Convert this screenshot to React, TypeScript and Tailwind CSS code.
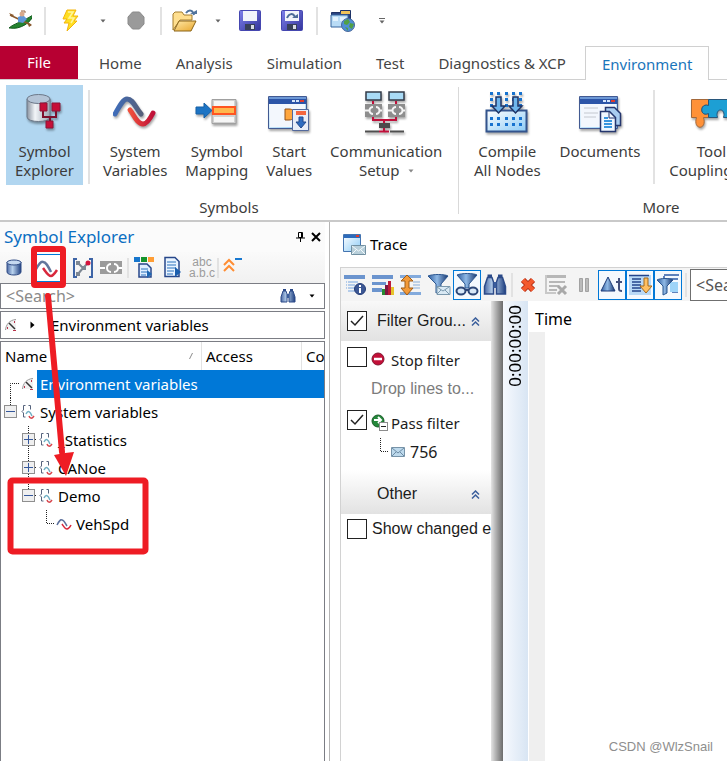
import React, { useState } from "react";

type Box = { children: React.ReactNode; w: number; h: number; className?: string };

const Glyph = ({ children, w, h, className = "" }: Box) => (
  <svg width={w} height={h} viewBox={`0 0 ${w} ${h}`} className={`shrink-0 ${className}`} fill="none" aria-hidden="true">
    {children}
  </svg>
);

const Caret = ({ className = "" }: { className?: string }) => (
  <Glyph w={6} h={4} className={className}>
    <path d="M0.500 0.500h5L3 3.500z" fill="currentColor" />
  </Glyph>
);

const Gradients = () => (
  <svg width="0" height="0" className="absolute" aria-hidden="true">
    <defs>
      <linearGradient id="blueSteel" x1="0" y1="0" x2="1" y2="0">
        <stop offset="0" stopColor="#4d6aa5" />
        <stop offset="0.400" stopColor="#b9d3ee" />
        <stop offset="1" stopColor="#1f3f80" />
      </linearGradient>
      <linearGradient id="folder" x1="0" y1="0" x2="1" y2="1">
        <stop offset="0" stopColor="#ffe9a8" />
        <stop offset="1" stopColor="#e8a62c" />
      </linearGradient>
      <linearGradient id="paper" x1="0" y1="0" x2="1" y2="1">
        <stop offset="0" stopColor="#ffffff" />
        <stop offset="1" stopColor="#8ccbf6" />
      </linearGradient>
      <linearGradient id="metal" x1="0" y1="0" x2="1" y2="0">
        <stop offset="0" stopColor="#8a93a0" />
        <stop offset="0.350" stopColor="#f2f5f8" />
        <stop offset="1" stopColor="#9ba5b2" />
      </linearGradient>
      <linearGradient id="floppy" x1="0" y1="0" x2="1" y2="1">
        <stop offset="0" stopColor="#7d80ea" />
        <stop offset="1" stopColor="#33349c" />
      </linearGradient>
      <linearGradient id="funnel" x1="0" y1="0" x2="1" y2="0">
        <stop offset="0" stopColor="#2d5a9c" />
        <stop offset="0.450" stopColor="#8fb9e6" />
        <stop offset="1" stopColor="#17366f" />
      </linearGradient>
      <linearGradient id="waveBlue" x1="0" y1="0" x2="1" y2="0">
        <stop offset="0" stopColor="#3f6cb8" />
        <stop offset="1" stopColor="#56607c" />
      </linearGradient>
      <linearGradient id="waveRed" x1="0" y1="0" x2="1" y2="0">
        <stop offset="0" stopColor="#f0503c" />
        <stop offset="1" stopColor="#bf1038" />
      </linearGradient>
    </defs>
  </svg>
);

/* ---------- quick access icons ---------- */
const Kayak = () => (
  <Glyph w={24} h={24}>
    <path d="M1 19C5 15 14 13 25 6C24 13 12 21 2 19z" fill="#23832f" stroke="#145a20" />
    <path d="M2 6L23 16" stroke="#8a5a2e" strokeWidth="1.500" />
    <path d="M1 4l5 2-2 2zM19 13l5 3-3 2z" fill="#8a5a2e" />
    <path d="M10 8l5-2 4 4-4 4-5-1z" fill="#5f97d8" />
    <circle cx="14" cy="5" r="2.500" fill="#d9a98b" />
    <path d="M13 2h4v2" stroke="#9a6540" />
  </Glyph>
);
const Lightning = () => (
  <Glyph w={24} h={24}>
    <path d="M9 1h9l-3 6h5l-4 5h3L9 22l2-8H6l3-4H5z" fill="#ffdf22" stroke="#f3b50c" strokeLinejoin="round" />
    <path d="M10 3h5l-4 6h5l-3 5" stroke="#fff69a" strokeWidth="1.500" />
  </Glyph>
);
const StopOctagon = () => (
  <Glyph w={24} h={24}>
    <path d="M8.500 3h7l4.500 5v7l-4.500 5h-7L4 15V8z" fill="#9a9a9a" stroke="#8a8a8a" />
  </Glyph>
);
const OpenFolder = () => (
  <Glyph w={26} h={24}>
    <path d="M1 21V5l2-2h7l2 3h8v5H8z" fill="#ffdf8f" stroke="#a47c2c" />
    <path d="M2 22L7 12h17l-5 10z" fill="url(#folder)" stroke="#8b6518" />
    <path d="M14 4c3-4 7-3 8 2" stroke="#52749c" strokeWidth="2" />
    <path d="M18 5h7v-4z" fill="#52749c" />
  </Glyph>
);
const Floppy = ({ arrow = false }: { arrow?: boolean }) => (
  <Glyph w={24} h={24}>
    <rect x="1.500" y="1.500" width="21" height="20" rx="1" fill="url(#floppy)" stroke="#4547b0" />
    <path d="M5 2h14v10H5z" fill="#f1f4fa" />
    <path d="M7 15h10v6H7z" fill="#38405a" />
    <path d="M13 16h3v4h-3z" fill="#d8dce6" />
    {arrow && (
      <>
        <path d="M7 9c2-5 6-5 8-1" stroke="#4c6c98" strokeWidth="2" />
        <path d="M12 9h6V5z" fill="#4c6c98" />
      </>
    )}
  </Glyph>
);
const GlobeWindow = () => (
  <Glyph w={26} h={24}>
    <path d="M1.500 3.500h9v-2h10v11h-19z" fill="#2a4380" stroke="#1e3266" />
    <path d="M11 2h9v3h-9z" fill="#f0c25a" />
    <path d="M1 6h17v12H1z" fill="#b9dcf6" stroke="#35649e" />
    <path d="M3 8h5v4H3zM10 8h6v4h-6z" fill="#e2f2fd" />
    <circle cx="18" cy="16" r="6.500" fill="#4f8fd6" stroke="#48679b" />
    <path d="M14 12l4-2 2 3-3 3-3-1zM20 14l4 1-2 5-3-2zM15 18l3 1v3z" fill="#51a045" />
  </Glyph>
);

/* ---------- ribbon icons, 44 x 48 ---------- */
const ribbonShadow = "drop-shadow-[1px_2px_1px_rgba(0,0,0,0.35)]";

const SymbolExplorerIcon = () => (
  <Glyph w={44} h={48} className={ribbonShadow}>
    <path d="M4 10v18c0 6 23 6 23 0V10z" fill="url(#metal)" stroke="#6c7888" />
    <ellipse cx="15.500" cy="10" rx="11.500" ry="4.500" fill="#b4c4d6" stroke="#6c7888" />
    <path d="M20 22v6h13v-6M27 28v5" stroke="#7d0f2c" strokeWidth="2" />
    <path d="M17 14h7v8h-7zM29 14h8v8h-8zM23 32h7v7h-7z" fill="#c60f38" stroke="#8d1436" />
  </Glyph>
);
const WaveIcon = () => (
  <Glyph w={44} h={48} className={ribbonShadow}>
    <path d="M2 25C6 18 10 10 14 10C20 10 22 18 28 25" stroke="url(#waveBlue)" strokeWidth="5" strokeLinecap="round" />
    <path d="M17 21C21 26 24 35 30 35C34 35 37 30 40 24" stroke="url(#waveRed)" strokeWidth="5" strokeLinecap="round" />
  </Glyph>
);
const MappingIcon = () => (
  <Glyph w={44} h={48} className={ribbonShadow}>
    <path d="M17 10.500h24v24H17z" fill="#d2d2d2" stroke="#a0a0a0" />
    <path d="M19 12h20v5H19zM19 28h20v5H19z" fill="#f6f6f6" />
    <path d="M18 18h22v7H18z" fill="#ffb84d" stroke="#ff5421" strokeWidth="2" />
    <path d="M1 18h8v-4l8 7.500-8 7.500v-4H1z" fill="#1d74c4" stroke="#1760a6" />
  </Glyph>
);
const WindowBase = () => (
  <>
    <path d="M1.500 7.500h38v32h-38z" fill="url(#paper)" stroke="#425a92" />
    <path d="M3 9h35v29H3z" fill="#f3f7fd" />
    <path d="M2 8h37v7H2z" fill="#2c55a8" />
    <path d="M2 8h37v2H2z" fill="#6d98d6" />
    <path d="M25 11h3v2h-3zM29 11h3v2h-3z" fill="#d6e5fa" />
    <path d="M33 11h4v2h-4z" fill="#e03a2c" />
  </>
);
const StartValuesIcon = () => (
  <Glyph w={44} h={48} className={ribbonShadow}>
    <WindowBase />
    <path d="M18 20h4c8 0 8 11 0 11h-4z" fill="#ffa63d" stroke="#915019" />
    <path d="M25.500 20.500h16v21h-16z" fill="#e8edf8" stroke="#53699c" />
    <path d="M29 22h10v4H29z" fill="#f4663f" />
    <path d="M32 28h4v5h3l-5 6-5-6h3z" fill="#2f6cc0" stroke="#23498d" />
  </Glyph>
);
const CommunicationIcon = () => (
  <Glyph w={44} h={48} className={ribbonShadow}>
    {[0, 23].map((x) => (
      <g key={x} transform={`translate(${x} 0)`}>
        <path d="M2 3h15v8H2z" fill="#a9dbf6" stroke="#333b48" strokeWidth="1.500" />
        <path d="M9 12v3" stroke="#c00f3a" strokeWidth="2" />
        <path d="M1 15h17v13H1z" fill="#8d8d8d" />
        <path d="M9 18a3.500 3.500 0 1 0 0 7M12 18a3.500 3.500 0 0 1 0 7M1 21.500h4M15 21.500h3" stroke="#f5f5f5" strokeWidth="2" />
      </g>
    ))}
    <path d="M9 28v3h23v-3M20 31v4M15 42.500h10" stroke="#c00f3a" strokeWidth="2" />
    <path d="M20 39v3" stroke="#c00f3a" strokeWidth="2" />
    <path d="M15 34h11v5H15z" fill="#4b4b4b" />
    <path d="M1 42.500h14M26 42.500h14" stroke="#4f4f4f" strokeWidth="2" />
  </Glyph>
);
const CompileIcon = () => (
  <Glyph w={44} h={48} className={ribbonShadow}>
    {[3, 9, 15].map((y) => (
      <path key={y} d={`M5 ${y}h3v3H5zM12 ${y}h3v3h-3zM20 ${y}h3v3h-3zM27 ${y}h3v3h-3zM34 ${y}h3v3h-3z`} fill="#1873cf" />
    ))}
    <path d="M1.500 21.500h40v21h-40z" fill="url(#paper)" stroke="#33548d" strokeWidth="2" />
    {[28, 34].map((y) => (
      <path key={y} d={`M5 ${y}h3v3H5zM12 ${y}h3v3h-3zM20 ${y}h3v3h-3zM27 ${y}h3v3h-3zM34 ${y}h3v3h-3z`} fill="#1873cf" />
    ))}
    <path d="M11 8h5v9h4l-6.500 7L7 17h4zM28 8h5v9h4l-6.500 7L24 17h4z" fill="#6fb6ec" stroke="#1f3567" strokeWidth="1.500" />
  </Glyph>
);
const DocumentsIcon = () => (
  <Glyph w={44} h={48} className={ribbonShadow}>
    <WindowBase />
    <path d="M6 19h14M6 24h14M6 28h12" stroke="#c4c8cf" />
    <path d="M27.500 18.500h9l6 6v12h-15z" fill="#a9cdf0" stroke="#24366e" strokeWidth="1.500" />
    <path d="M22.500 22.500h9l6 6v14h-15z" fill="#eff7ff" stroke="#24366e" strokeWidth="1.500" />
    <path d="M31 23v6h6" stroke="#24366e" />
    <path d="M26 29h4M26 32h8M26 35h8M26 38h8" stroke="#3895de" strokeWidth="2" />
  </Glyph>
);
const CouplingIcon = () => (
  <Glyph w={44} h={48} className={ribbonShadow}>
    <path d="M2.500 10.500h17v6c-9-3-9 12 0 8v4h-5c4 13-11 13-7 0h-5z" fill="#ff9138" stroke="#a3683a" />
    <path d="M19.500 10.500h23v18h-8c3-10-9-10-6 0h-9v-4c-9 4-9-11 0-8z" fill="#1d9fd4" stroke="#28567b" />
  </Glyph>
);

/* ---------- explorer toolbar icons, 24 x 24 ---------- */
const DbIcon = () => (
  <Glyph w={18} h={24}>
    <path d="M2 6v10c0 4 14 4 14 0V6z" fill="url(#blueSteel)" stroke="#314d86" />
    <ellipse cx="9" cy="6.500" rx="7" ry="2.500" fill="#c5d9f0" stroke="#314d86" />
  </Glyph>
);
const SmallWave = () => (
  <Glyph w={24} h={24}>
    <path d="M1 13c3-5 5-8 7-7 3 0 5 4 8 10" stroke="#63779c" strokeWidth="2.500" />
    <path d="M8 12c3 4 5 8 8 8 2 0 4-3 6-6" stroke="#d8283c" strokeWidth="2.500" />
  </Glyph>
);
const BracketIcon = () => (
  <Glyph w={24} h={24}>
    <path d="M6 3H3v18h3M18 3h3v18h-3" stroke="#3d64a6" strokeWidth="2" />
    <path d="M7 7l5 5 5-5M12 12l-5 6" stroke="#7d8793" strokeWidth="2" />
    <path d="M5 5h4v4H5zM5 16h4v4H5zM11 10h4v4h-4z" fill="#7d8793" />
    <circle cx="17" cy="7" r="2.500" fill="#d3123b" />
  </Glyph>
);
const NodeIcon = () => (
  <Glyph w={24} h={24}>
    <path d="M1 5h22v13H1z" fill="#9b9b9b" />
    <path d="M12 8a4 4 0 1 0 0 8M15 8a4 4 0 0 1 0 8M1 12h5M19 12h4" stroke="#fff" strokeWidth="2" />
  </Glyph>
);
const TreeDocIcon = () => (
  <Glyph w={24} h={24}>
    <path d="M1 1h6v5H1z" fill="#1776cd" />
    <path d="M8 1h6v5H8z" fill="#15942b" />
    <path d="M15 1h6v5h-6z" fill="#ff9d35" />
    <path d="M6 8h8l4 4v9H6z" fill="#e1efff" stroke="#27478a" strokeWidth="1.500" />
    <path d="M8 13h7M8 16h7M8 19h5" stroke="#2b72bd" />
    <path d="M14 14l5 4-5 4z" fill="#1f67b2" />
  </Glyph>
);
const DocIcon = () => (
  <Glyph w={24} h={24}>
    <path d="M4 1.500h10l4 4v15H4z" fill="#eaf4ff" stroke="#27478a" strokeWidth="1.500" />
    <path d="M6 6h9M6 9h9M6 12h9M6 15h7M6 18h6" stroke="#2b72bd" />
    <path d="M14 11l6 5-6 5z" fill="#1b5fae" />
  </Glyph>
);
const CollapseIcon = () => (
  <Glyph w={24} h={24}>
    <path d="M3 9l5-5 5 5M3 15l5-5 5 5" stroke="#ff8d33" strokeWidth="2" />
    <path d="M14 3h7" stroke="#1878d0" strokeWidth="2" />
  </Glyph>
);
const Binoculars = ({ size = 16 }: { size?: number }) => (
  <svg width={size} height={size} viewBox="0 0 16 16" fill="none" aria-hidden="true" className="shrink-0">
    <path d="M3 3h3l1 3v8H1V9zM10 3h3l2 6v5H9V6z" fill="url(#blueSteel)" stroke="#2c4a88" />
    <path d="M7 6h2v4H7z" fill="#3b5d9c" />
    <path d="M3 1h3v2H3zM10 1h3v2h-3z" fill="#2c4a88" />
  </svg>
);
const GaugeIcon = () => (
  <Glyph w={14} h={14}>
    <path d="M12 2C5 2 2 7 2 12h10z" fill="#f1f1f1" />
    <path d="M12 1.500C5 2 2 7 1.500 12" stroke="#9a9a9a" />
    <path d="M5 5l6 6" stroke="#333" strokeWidth="1.500" />
    <path d="M10 3h1v2h-1zM3 9h1v2H3zM9 12h3v1H9z" fill="#b8324a" />
  </Glyph>
);

/* ---------- tree parts ---------- */
const BraceWave = () => (
  <Glyph w={14} h={16}>
    <path d="M4.500 1.500H2.500v4.500L1 7.500l1.500 1.500v4h2M7.500 1.500h2v4" stroke="#55627c" />
    <path d="M5 10c2-4 4-3 6 2" stroke="#6faec3" strokeWidth="1.500" />
    <path d="M8 12c1 3 3 3 5 0" stroke="#d8454c" strokeWidth="1.500" />
  </Glyph>
);
const TinyWave = () => (
  <Glyph w={16} h={14}>
    <path d="M1 8c2-4 4-6 5-5 2 0 3 3 5 6" stroke="#5c709c" strokeWidth="1.500" />
    <path d="M6 7c2 3 3 5 5 5 1 0 3-2 4-4" stroke="#d8283c" strokeWidth="1.500" />
  </Glyph>
);
const Guide = ({ d }: { d: string }) => (
  <Glyph w={18} h={28}>
    <path d={d} stroke="#222" strokeDasharray="1 1" />
  </Glyph>
);
const Expander = ({ open, d }: { open: boolean; d: string }) => (
  <button type="button" aria-label={open ? "Collapse" : "Expand"} className="h-7 w-[18px] shrink-0">
    <Glyph w={18} h={28}>
      <path d={d} stroke="#222" strokeDasharray="1 1" />
      <rect x="3.500" y="7.500" width="12" height="12" fill="#efefef" stroke="#8f8f8f" />
      <path d={open ? "M5 13.500h9" : "M5 13.500h9M9.500 9v9"} stroke="#35589c" />
    </Glyph>
  </button>
);

/* ---------- trace toolbar icons ---------- */
const ListInfo = () => (
  <Glyph w={24} h={24}>
    <path d="M1 2h21v4H1z" fill="#6b94ce" />
    <path d="M5 9h10M5 12h7M5 15h7M5 18h7M3 9h1M3 12h1M3 15h1" stroke="#9fbfe6" strokeWidth="1.500" />
    <circle cx="17" cy="16" r="5.500" fill="#3c5794" stroke="#253d78" />
    <path d="M17 12v2M17 15v5" stroke="#fff" strokeWidth="2" />
  </Glyph>
);
const ListChart = () => (
  <Glyph w={24} h={24}>
    <path d="M1 2h21v4H1zM1 9h14v3H1zM1 15h10v4H1z" fill="#6b94ce" />
    <path d="M11 16h3v6h-3z" fill="#288b32" />
    <path d="M14 12h3v10h-3z" fill="#7c1740" />
    <path d="M17 8h3v14h-3z" fill="#bd1c38" />
    <path d="M20 14h3v8h-3z" fill="#e6c42c" />
  </Glyph>
);
const ListExpand = () => (
  <Glyph w={24} h={24}>
    <path d="M1 2h21v3H1zM1 19h21v3H1z" fill="#83aadc" />
    <path d="M14 9h7M14 12h7M14 15h7" stroke="#87add9" />
    <path d="M8 2l6 6h-4v7h4l-6 7-6-7h4V8H2z" fill="#f29a39" stroke="#a05c16" />
  </Glyph>
);
const funnelPath = "M1 3c4-2 17-2 20 0l-7 8v6l-5 3v-9z";
const FunnelMail = () => (
  <Glyph w={24} h={24}>
    <path d={funnelPath} fill="url(#funnel)" stroke="#2b568f" />
    <path d="M10 13.500h13v8H10z" fill="#d9e9f4" stroke="#7b98ad" />
    <path d="M10 14l6 4 6-4M10 21l4-4M22 21l-4-4" stroke="#7b98ad" />
  </Glyph>
);
const FunnelGlasses = () => (
  <Glyph w={24} h={24}>
    <path d="M2 2c4-2 17-2 20 0l-8 9v4h-4v-4z" fill="url(#funnel)" stroke="#2b568f" />
    <ellipse cx="6" cy="18" rx="4.500" ry="3.500" fill="#d7e8f8" stroke="#2d4778" strokeWidth="2" />
    <ellipse cx="18" cy="18" rx="4.500" ry="3.500" fill="#d7e8f8" stroke="#2d4778" strokeWidth="2" />
    <path d="M10 17h4" stroke="#2d4778" strokeWidth="2" />
  </Glyph>
);
const RedX = () => (
  <Glyph w={24} h={24}>
    <path d="M7 7l10 10M17 7L7 17" stroke="#b32d13" strokeWidth="6" />
    <path d="M7 7l10 10M17 7L7 17" stroke="#f4592d" strokeWidth="4" />
  </Glyph>
);
const ListClear = () => (
  <Glyph w={24} h={24}>
    <path d="M1 2h21v3H1zM5 8h16v2H5zM5 12h10v2H5zM5 16h8v2H5z" fill="#b7b7b7" />
    <path d="M2 2v18h10" stroke="#c8c8c8" strokeWidth="2" />
    <path d="M14 13l8 8M22 13l-8 8" stroke="#a9a9a9" strokeWidth="3" />
  </Glyph>
);
const PauseGlyph = () => (
  <Glyph w={24} h={24}>
    <path d="M7.500 5.500h3v13h-3zM13.500 5.500h3v13h-3z" fill="#bababa" stroke="#a2a2a2" />
  </Glyph>
);
const DeltaT = () => (
  <Glyph w={24} h={24}>
    <path d="M1 18L8 4l7 14z" fill="url(#funnel)" stroke="#1c3b78" />
    <path d="M19 5v11c0 2 1 2 3 2M16 9h6" stroke="#42507c" strokeWidth="2" />
  </Glyph>
);
const ListDown = () => (
  <Glyph w={24} h={24}>
    <path d="M1 2h22v20H1z" fill="#b9d9f6" />
    <path d="M1 2.500h20M4 6h9M4 9h9M4 12h9M4 15h9M4 18h9" stroke="#24458c" strokeWidth="1.500" />
    <path d="M16 5h4v8h4l-6 7-6-7h4z" fill="#ffc062" stroke="#a56818" />
  </Glyph>
);
const ListFunnel = () => (
  <Glyph w={24} h={24}>
    <path d="M8 2h15M8 3v3h14M16 11h6M16 15h6M16 19h6" stroke="#2d5aa5" strokeWidth="1.500" />
    <path d="M14 9h8v10h-8z" fill="#9dd4f8" />
    <path d="M1 7c3-2 13-2 16 0l-6 6v7l-4 2v-9z" fill="url(#funnel)" stroke="#2b568f" />
  </Glyph>
);
const TraceWindow = () => (
  <Glyph w={24} h={24}>
    <path d="M1.500 1.500h17v17h-17z" fill="url(#paper)" stroke="#4474b0" />
    <path d="M2 2h16v3H2z" fill="#2d6bbb" />
    <path d="M14 2h3v2h-3z" fill="#e03a2c" />
    <path d="M9.500 12.500h14v9h-14z" fill="#b8cfda" stroke="#7290a1" />
    <path d="M10 13l6.500 5 6.500-5M10 21l4-4M23 21l-4-4" stroke="#f4fafc" />
  </Glyph>
);
const ChevronsUp = () => (
  <Glyph w={9} h={9}>
    <path d="M1 4.500L4.500 1 8 4.500M1 8.500L4.500 5 8 8.500" stroke="#3b5f9c" strokeWidth="1.500" />
  </Glyph>
);

/* ---------- composed pieces ---------- */
const tabs = ["Home", "Analysis", "Simulation", "Test", "Diagnostics & XCP"];

function RibbonButton({ icon, lines, caret, className = "" }: { icon: React.ReactNode; lines: string[]; caret?: boolean; className?: string }) {
  return (
    <button type="button" className={`flex h-[100px] shrink-0 flex-col items-center pt-1 text-center leading-[19px] ${className}`}>
      {icon}
      <span className="mt-1 whitespace-nowrap pt-px">{lines[0]}</span>
      {lines[1] && (
        <span className="flex items-center whitespace-nowrap">
          {lines[1]}
          {caret && <Caret className="ml-2 text-[#888]" />}
        </span>
      )}
    </button>
  );
}

const Rule = ({ className = "" }: { className?: string }) => <span className={`w-0.5 shrink-0 bg-[#e2e2e2] ${className}`} />;

function Tick({ id, initial }: { id: string; initial: boolean }) {
  const [on, setOn] = useState(initial);
  return (
    <span className="relative h-5 w-5 shrink-0">
      <input
        id={id}
        type="checkbox"
        checked={on}
        onChange={() => setOn(!on)}
        className="peer block h-5 w-5 appearance-none border border-[#222] bg-white"
      />
      <svg viewBox="0 0 20 20" className="pointer-events-none absolute inset-0 hidden peer-checked:block" fill="none" aria-hidden="true">
        <path d="M4 10l4 4 8-9" stroke="#222" strokeWidth="1.500" />
      </svg>
    </span>
  );
}

function TreeRow({ cells, icon, label, selected }: { cells: React.ReactNode; icon: React.ReactNode; label: string; selected?: boolean }) {
  return (
    <li className="flex h-7 items-center">
      {cells}
      <span className="flex w-[18px] shrink-0 justify-center">{icon}</span>
      <span className={`flex h-7 items-center whitespace-nowrap pl-[3px] ${selected ? "flex-1 bg-[#0078d7] text-white" : ""}`}>{label}</span>
    </li>
  );
}

const ToolButton = ({ label, active, children }: { label: string; active?: boolean; children: React.ReactNode }) => (
  <button
    type="button"
    aria-label={label}
    className={`flex h-[30px] w-7 shrink-0 items-center justify-center border ${active ? "border-[#0078d7] bg-[#f4f9fe]" : "border-transparent"}`}
  >
    {children}
  </button>
);

export default function App() {
  return (
    <div className="relative flex h-screen flex-col overflow-hidden bg-white font-['Noto_Sans',sans-serif] text-[15px] text-black">
      <Gradients />

      <header className="shrink-0">
        <div className="flex h-[46px] items-center pb-1 pl-2 text-[#666]">
          <button type="button" aria-label="Application menu"><Kayak /></button>
          <Rule className="mx-3 h-7" />
          <button type="button" aria-label="Start"><Lightning /></button>
          <button type="button" aria-label="Start options" className="flex w-[42px] justify-center"><Caret /></button>
          <button type="button" aria-label="Stop"><StopOctagon /></button>
          <Rule className="mr-2.5 ml-3 h-7" />
          <button type="button" aria-label="Open"><OpenFolder /></button>
          <button type="button" aria-label="Open recent" className="flex w-10 justify-center"><Caret /></button>
          <button type="button" aria-label="Save"><Floppy /></button>
          <button type="button" aria-label="Save as" className="ml-[18px]"><Floppy arrow /></button>
          <Rule className="mx-3 h-7" />
          <button type="button" aria-label="Desktops"><GlobeWindow /></button>
          <button type="button" aria-label="Customize" className="flex w-[52px] flex-col items-center gap-px">
            <span className="h-px w-1.5 bg-[#666]" />
            <Caret />
          </button>
        </div>

        <nav className="flex h-[34px] border-b border-[#d0d0d0] text-[#444]">
          <button type="button" className="w-[78px] shrink-0 bg-[#b70032] text-white">File</button>
          <div className="flex shrink-0 gap-[34px] pt-0.5 pr-[19px] pl-[21px]">
            {tabs.map((t) => (
              <button key={t} type="button" className="whitespace-nowrap">{t}</button>
            ))}
          </div>
          <button type="button" className="-mb-px h-[34px] shrink-0 border border-b-0 border-[#d0d0d0] bg-white px-4 pt-0.5 text-[#1a75bb]">
            Environment
          </button>
        </nav>

        <div className="flex h-[142px] overflow-hidden border-b-2 border-[#c9c9c9] text-[#3c3c3c]">
          <section className="flex w-[458px] shrink-0 flex-col">
            <div className="flex pt-[5px] pl-1.5">
              <RibbonButton className="w-[77px] bg-[#b1d6f0]" icon={<SymbolExplorerIcon />} lines={["Symbol", "Explorer"]} />
              <Rule className="mx-[5px] mt-[5px] h-[94px]" />
              <div className="flex gap-[18px] pl-2">
                <RibbonButton icon={<WaveIcon />} lines={["System", "Variables"]} />
                <RibbonButton icon={<MappingIcon />} lines={["Symbol", "Mapping"]} />
                <RibbonButton icon={<StartValuesIcon />} lines={["Start", "Values"]} />
                <RibbonButton icon={<CommunicationIcon />} lines={["Communication", "Setup"]} caret />
              </div>
            </div>
            <h2 className="pt-3 text-center leading-5">Symbols</h2>
          </section>
          <span className="mt-[7px] h-[127px] w-px shrink-0 bg-[#d9d9d9]" />
          <section className="flex w-[404px] shrink-0 flex-col">
            <div className="flex pt-[5px] pl-[15px]">
              <RibbonButton icon={<CompileIcon />} lines={["Compile", "All Nodes"]} />
              <RibbonButton className="ml-[19px]" icon={<DocumentsIcon />} lines={["Documents"]} />
              <Rule className="mx-[13px] mt-[5px] h-[94px]" />
              <RibbonButton className="w-[86px]" icon={<CouplingIcon />} lines={["Tool", "Couplings"]} caret />
            </div>
            <h2 className="pt-3 text-center leading-5">More</h2>
          </section>
        </div>
      </header>

      <main className="flex min-h-0 flex-1">
        <aside className="flex w-[325px] shrink-0 flex-col bg-[#fbfbfb]">
          <div className="flex h-[30px] items-center pl-1">
            <h2 className="flex-1 text-[17px] text-[#0b6fc2]">Symbol Explorer</h2>
            <button type="button" aria-label="Pin" className="mr-1.5">
              <Glyph w={9} h={10}>
                <path d="M2.500 0.500h4v5h-4zM5.500 1v5M0 6h9M4.500 6v4" stroke="#000" />
              </Glyph>
            </button>
            <button type="button" aria-label="Close" className="mr-1">
              <Glyph w={10} h={10}>
                <path d="M1 1l8 8M9 1L1 9" stroke="#000" strokeWidth="2" />
              </Glyph>
            </button>
          </div>
          <div className="flex h-[31px] items-center bg-linear-to-b from-[#fafafa] to-[#f1f1f1] pl-[5px]">
            <button type="button" aria-label="Database"><DbIcon /></button>
            <button type="button" aria-label="System variables" className="mx-2.5 flex h-7 items-center border-y border-[#0078d7] bg-white px-0.5"><SmallWave /></button>
            <button type="button" aria-label="Signals"><BracketIcon /></button>
            <button type="button" aria-label="Nodes" className="ml-1"><NodeIcon /></button>
            <Rule className="mx-1 h-5" />
            <button type="button" aria-label="Group by type"><TreeDocIcon /></button>
            <button type="button" aria-label="Details" className="ml-1"><DocIcon /></button>
            <button type="button" className="ml-1 w-[26px] text-center font-['Liberation_Sans',sans-serif] text-[12px] leading-[11px] text-[#9c9c9c]">
              abc<br />a.b.c
            </button>
            <Rule className="ml-0.5 h-5" />
            <button type="button" aria-label="Collapse all" className="ml-0.5"><CollapseIcon /></button>
          </div>

          <div className="flex h-[26px] shrink-0 items-center border border-[#7b7d84] bg-white">
            <input
              type="text"
              aria-label="Search symbols"
              placeholder="<Search>"
              className="h-6 min-w-0 flex-1 bg-transparent pl-[5px] text-[16px] outline-none placeholder:text-[#8b8b8b] placeholder:opacity-100"
            />
            <button type="button" aria-label="Find" className="mr-1"><Binoculars /></button>
            <button type="button" aria-label="Search options" className="flex w-6 justify-center text-black"><Caret /></button>
          </div>
          <div className="mt-0.5 flex h-7 shrink-0 items-center border border-[#7b7d84] bg-white pl-[3px]">
            <GaugeIcon />
            <Glyph w={5} h={8} className="ml-3">
              <path d="M0.500 0.500v7L4.500 4z" fill="#000" />
            </Glyph>
            <button type="button" className="ml-4">Environment variables</button>
          </div>

          <div className="mt-0.5 flex min-h-0 flex-1 flex-col overflow-hidden border border-b-0 border-[#7b7d84] bg-white">
            <div className="flex h-7 shrink-0 items-center">
              <span className="flex h-full w-[201px] shrink-0 items-center justify-between border-r border-[#e3e3e3] pr-2 pl-1">
                Name
                <Glyph w={4} h={6}><path d="M0.500 6L3.500 0" stroke="#8b8b8b" /></Glyph>
              </span>
              <span className="flex h-full w-[100px] shrink-0 items-center border-r border-[#e3e3e3] pl-1">Access</span>
              <span className="overflow-hidden whitespace-nowrap pl-1">Co</span>
            </div>
            <ul>
              <TreeRow selected cells={<Guide d="M9.500 28V13.500H18" />} icon={<GaugeIcon />} label="Environment variables" />
              <TreeRow cells={<Expander open d="M9.500 0v8" />} icon={<BraceWave />} label="System variables" />
              <TreeRow cells={<><span className="w-[18px]" /><Expander open={false} d="M9.500 0v28M16 13.500h2" /></>} icon={<BraceWave />} label="_Statistics" />
              <TreeRow cells={<><span className="w-[18px]" /><Expander open={false} d="M9.500 0v28M16 13.500h2" /></>} icon={<BraceWave />} label="CANoe" />
              <TreeRow cells={<><span className="w-[18px]" /><Expander open d="M9.500 0v8M16 13.500h2" /></>} icon={<BraceWave />} label="Demo" />
              <TreeRow cells={<><span className="w-9" /><Guide d="M9.500 0v13.500H18" /></>} icon={<TinyWave />} label="VehSpd" />
            </ul>
          </div>
        </aside>

        <section className="ml-1 flex min-w-0 flex-1 flex-col border-l border-[#b5b5b5]">
          <div className="flex h-[45px] shrink-0 items-center gap-1 pl-3">
            <TraceWindow />
            <h2>Trace</h2>
          </div>
          <div className="ml-2.5 flex min-h-0 flex-1 flex-col border-t border-l border-[#d2d2d2]">
            <div className="flex h-[33px] shrink-0 items-center overflow-hidden bg-[#f4f4f4]">
              <ToolButton label="Info"><ListInfo /></ToolButton>
              <ToolButton label="Statistics"><ListChart /></ToolButton>
              <ToolButton label="Expand rows"><ListExpand /></ToolButton>
              <ToolButton label="Message filter"><FunnelMail /></ToolButton>
              <ToolButton label="View filter" active><FunnelGlasses /></ToolButton>
              <ToolButton label="Find"><Binoculars size={24} /></ToolButton>
              <Rule className="mr-px ml-0.5 h-6" />
              <ToolButton label="Delete"><RedX /></ToolButton>
              <ToolButton label="Clear list"><ListClear /></ToolButton>
              <ToolButton label="Pause"><PauseGlyph /></ToolButton>
              <ToolButton label="Delta time" active><DeltaT /></ToolButton>
              <ToolButton label="Scroll" active><ListDown /></ToolButton>
              <ToolButton label="Column filter" active><ListFunnel /></ToolButton>
              <Rule className="mx-[3px] h-6" />
              <input
                type="text"
                aria-label="Search trace"
                placeholder="<Search>"
                className="h-8 w-40 shrink-0 border border-[#6f6f6f] bg-white pl-[5px] text-[16px] outline-none placeholder:text-[#555] placeholder:opacity-100"
              />
            </div>

            <div className="flex min-h-0 flex-1">
              <div className="w-[150px] shrink-0 overflow-hidden whitespace-nowrap font-['Liberation_Sans',sans-serif] text-[16px] text-[#1c1c1c]">
                <div className="flex h-10 items-center bg-linear-to-b from-[#f8f8f8] to-[#e2e2e2] pl-1.5">
                  <Tick id="groups" initial />
                  <label htmlFor="groups" className="w-[104px] pl-2.5">Filter Grou...</label>
                  <button type="button" aria-label="Collapse filter groups"><ChevronsUp /></button>
                </div>
                <div className="flex h-9 items-center pl-1.5 font-['Noto_Sans',sans-serif] text-[15px]">
                  <span className="-mt-1 h-5"><Tick id="stop" initial={false} /></span>
                  <Glyph w={14} h={14} className="ml-1">
                    <circle cx="7" cy="7" r="6" fill="#c20f38" stroke="#83142f" />
                    <path d="M3 7h8" stroke="#fff" strokeWidth="2.500" />
                  </Glyph>
                  <label htmlFor="stop" className="pt-0.5 pl-1.5">Stop filter</label>
                </div>
                <p className="h-[25px] pl-[30px] leading-6 text-[#7c7c7c]">Drop lines to...</p>
                <div className="flex h-9 items-center pl-1.5 font-['Noto_Sans',sans-serif] text-[15px]">
                  <Tick id="pass" initial />
                  <Glyph w={17} h={17} className="mt-1 ml-1">
                    <circle cx="7" cy="7" r="6" fill="#24873a" stroke="#175c26" />
                    <path d="M3 6h6M7 3l3 3-3 3" stroke="#fff" strokeWidth="2" />
                    <rect x="8.500" y="8.500" width="8" height="8" fill="#fff" stroke="#8c8c8c" />
                    <path d="M10 12.500h5" stroke="#222" />
                  </Glyph>
                  <label htmlFor="pass" className="pt-1.5 pl-[3px]">Pass filter</label>
                </div>
                <div className="flex h-7 items-center pl-[34px] font-['Noto_Sans',sans-serif]">
                  <Guide d="M5.500 0v13.500H14" />
                  <Glyph w={14} h={10} className="-ml-0.5">
                    <path d="M0.500 0.500h13v9H0.500z" fill="#bdd9ec" stroke="#7793a8" />
                    <path d="M1 1l6 5 6-5M1 9l4-4M13 9L9 5" stroke="#6d8ca5" />
                  </Glyph>
                  <span className="pl-[5px]">756</span>
                </div>
                <div className="mt-1 flex h-11 items-center bg-linear-to-b from-white to-[#e2e2e2] pt-1 pl-9">
                  <span className="w-[94px]">Other</span>
                  <button type="button" aria-label="Collapse other"><ChevronsUp /></button>
                </div>
                <div className="flex h-[30px] items-center pl-1.5">
                  <Tick id="changed" initial={false} />
                  <label htmlFor="changed" className="pl-[5px]">Show changed events only</label>
                </div>
              </div>

              <div className="w-3 shrink-0 bg-linear-to-r from-[#e4e4e4] to-[#6c6c6c]" />
              <div className="w-[25px] shrink-0 bg-linear-to-r from-[#f6f9fe] to-[#d8e5f3] pt-1">
                <time className="block rotate-180 text-[17px] leading-6 [writing-mode:vertical-rl]">0:00:00:00</time>
              </div>
              <div className="flex min-w-0 flex-1 flex-col pl-px">
                <div className="flex h-[31px] shrink-0 items-center bg-white pt-1 pl-1.5 text-[16px]">Time</div>
                <div className="w-4 flex-1 bg-[#efefef]" />
              </div>
            </div>
          </div>
        </section>
      </main>

      <svg className="pointer-events-none absolute top-0 left-0" width="160" height="560" fill="none" aria-hidden="true">
        <rect x="34" y="249" width="29" height="36" rx="1" stroke="#ee1c24" strokeWidth="6" />
        <path d="M48 296L62 452" stroke="#ee1c24" strokeWidth="6" strokeLinecap="round" />
        <path d="M54 455l11-2 9-1-8 24z" fill="#ee1c24" />
        <rect x="10.500" y="480.500" width="135" height="71" rx="2" stroke="#ee1c24" strokeWidth="6" />
      </svg>
      <p className="absolute right-[14px] bottom-[5px] font-['Liberation_Sans',sans-serif] text-[13px] text-[#8e8e8e]">CSDN @WlzSnail</p>
    </div>
  );
}
